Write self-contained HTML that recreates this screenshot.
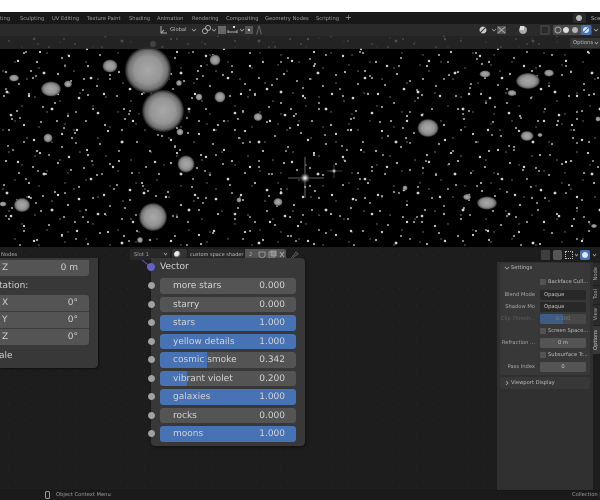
<!DOCTYPE html>
<html><head><meta charset="utf-8"><style>
*{box-sizing:border-box}
html,body{margin:0;padding:0;width:600px;height:500px;overflow:hidden;background:#fff}
body{position:relative;font-family:"DejaVu Sans","Liberation Sans",sans-serif;text-rendering:geometricPrecision;filter:blur(.35px)}
.a{position:absolute}
.t{position:absolute;white-space:nowrap;font-size:5.2px;line-height:8px;color:#9c9c9c}
.r{position:absolute;left:160px;width:136px;height:15.5px;border-radius:3px;background:#545454;overflow:hidden;font-size:9px;line-height:16px;color:#d4d4d4}
.r i{position:absolute;left:0;top:0;bottom:0;background:#4772b3}
.r b{position:absolute;left:13px;font-weight:normal;white-space:nowrap}
.r u{position:absolute;right:11px;text-decoration:none}
.s{position:absolute;left:147.5px;width:7px;height:7px;border-radius:50%;background:#a1a1a1}
.n{position:absolute;white-space:nowrap;font-size:9px;line-height:16px;color:#d0d0d0}
.lbl{position:absolute;white-space:nowrap;font-size:5.2px;line-height:11px;color:#a8a8a8}
.lr{position:absolute;left:500px;width:35px;text-align:right;white-space:nowrap;font-size:5.2px;line-height:10px;color:#a8a8a8}
.f{position:absolute;left:540px;width:46px;height:10px;border-radius:2px;background:#545454;font-size:5.2px;line-height:10px;color:#c4c4c4;text-align:center}
.dd{background:#282828;text-align:left;padding-left:4px}
.cb{position:absolute;left:540px;width:6px;height:6px;background:#545454;border-radius:1px}
.vt{position:absolute;left:593px;writing-mode:vertical-rl;transform:rotate(180deg);line-height:7px;width:7px;font-size:5.2px;white-space:nowrap;color:#aaa}
</style></head><body>
<div class="a" style="left:0;top:12px;width:600px;height:12px;background:#181818"></div>
<div class="a" style="left:0;top:24px;width:600px;height:12px;background:#2a2a2a"></div>

<svg class="a" style="left:0;top:36px" width="600" height="211" viewBox="0 36 600 211" xmlns="http://www.w3.org/2000/svg">
<defs>
<radialGradient id="g"><stop offset="0" stop-color="#a8a8a8"/><stop offset=".6" stop-color="#959595"/><stop offset=".85" stop-color="#6f6f6f"/><stop offset="1" stop-color="#1a1a1a"/></radialGradient>
<radialGradient id="l"><stop offset="0" stop-color="#fff"/><stop offset=".3" stop-color="#aaa"/><stop offset="1" stop-color="#000" stop-opacity="0"/></radialGradient>
<pattern id="p1" width="113" height="89" patternUnits="userSpaceOnUse"><g fill="#b8b8b8">
<circle cx="4" cy="7" r="1"/><circle cx="17" cy="22" r="1"/><circle cx="29" cy="5" r="1.1"/><circle cx="41" cy="33" r="1"/><circle cx="55" cy="14" r="1"/><circle cx="68" cy="27" r="1.1"/><circle cx="79" cy="9" r="1"/><circle cx="93" cy="20" r="1"/><circle cx="105" cy="36" r="1.1"/><circle cx="9" cy="41" r="1"/><circle cx="24" cy="53" r="1"/><circle cx="37" cy="62" r="1.1"/><circle cx="49" cy="47" r="1"/><circle cx="62" cy="58" r="1"/><circle cx="75" cy="44" r="1"/><circle cx="88" cy="66" r="1.1"/><circle cx="100" cy="55" r="1"/><circle cx="110" cy="75" r="1"/><circle cx="6" cy="72" r="1.1"/><circle cx="19" cy="84" r="1"/><circle cx="33" cy="78" r="1"/><circle cx="46" cy="85" r="1"/><circle cx="58" cy="74" r="1.1"/><circle cx="71" cy="81" r="1"/><circle cx="84" cy="79" r="1"/><circle cx="97" cy="86" r="1"/><circle cx="12" cy="30" r="1"/><circle cx="64" cy="39" r="1"/><circle cx="86" cy="32" r="1"/><circle cx="43" cy="18" r="1"/></g></pattern>
<pattern id="p2" width="137" height="101" patternUnits="userSpaceOnUse"><g fill="#d6d6d6">
<circle cx="11" cy="14" r="1.3"/><circle cx="34" cy="39" r="1.2"/><circle cx="52" cy="8" r="1.4"/><circle cx="77" cy="29" r="1.2"/><circle cx="98" cy="12" r="1.3"/><circle cx="122" cy="41" r="1.4"/><circle cx="18" cy="61" r="1.2"/><circle cx="44" cy="73" r="1.4"/><circle cx="69" cy="56" r="1.2"/><circle cx="91" cy="78" r="1.3"/><circle cx="113" cy="66" r="1.2"/><circle cx="130" cy="89" r="1.3"/><circle cx="7" cy="92" r="1.4"/><circle cx="29" cy="96" r="1.2"/><circle cx="58" cy="94" r="1.2"/><circle cx="79" cy="98" r="1.3"/><circle cx="104" cy="94" r="1.2"/><circle cx="133" cy="20" r="1.2"/><circle cx="62" cy="33" r="1.1"/><circle cx="24" cy="24" r="1.1"/><circle cx="87" cy="49" r="1.1"/><circle cx="108" cy="30" r="1.1"/><circle cx="40" cy="52" r="1.1"/></g></pattern>
<pattern id="p3" width="71" height="59" patternUnits="userSpaceOnUse"><g fill="#7a7a7a">
<circle cx="3" cy="12" r=".8"/><circle cx="15" cy="3" r=".7"/><circle cx="27" cy="20" r=".8"/><circle cx="39" cy="9" r=".7"/><circle cx="52" cy="24" r=".8"/><circle cx="65" cy="6" r=".7"/><circle cx="9" cy="34" r=".8"/><circle cx="22" cy="47" r=".7"/><circle cx="35" cy="38" r=".8"/><circle cx="47" cy="53" r=".7"/><circle cx="60" cy="42" r=".8"/><circle cx="68" cy="55" r=".7"/></g></pattern>
<pattern id="p4" width="167" height="127" patternUnits="userSpaceOnUse"><g fill="#a4a4a4">
<circle cx="8" cy="19" r="1"/><circle cx="13" cy="23" r="1"/><circle cx="31" cy="71" r="1.1"/><circle cx="36" cy="76" r="1"/><circle cx="49" cy="28" r="1"/><circle cx="72" cy="11" r="1.1"/><circle cx="76" cy="16" r="1"/><circle cx="83" cy="90" r="1"/><circle cx="88" cy="95" r="1.1"/><circle cx="102" cy="47" r="1"/><circle cx="119" cy="24" r="1"/><circle cx="124" cy="109" r="1.1"/><circle cx="129" cy="114" r="1"/><circle cx="143" cy="59" r="1"/><circle cx="148" cy="64" r="1.1"/><circle cx="158" cy="8" r="1"/><circle cx="20" cy="118" r="1"/><circle cx="57" cy="121" r="1.1"/><circle cx="65" cy="66" r="1"/><circle cx="110" cy="79" r="1"/><circle cx="6" cy="89" r="1"/><circle cx="38" cy="44" r="1"/><circle cx="92" cy="34" r="1"/><circle cx="136" cy="88" r="1"/><circle cx="152" cy="103" r="1"/><circle cx="26" cy="52" r="1"/><circle cx="76" cy="112" r="1"/><circle cx="114" cy="62" r="1"/></g></pattern>
</defs>
<rect x="0" y="36" width="600" height="211" fill="#000"/>
<rect x="0" y="36" width="600" height="211" fill="url(#p3)"/>
<rect x="0" y="36" width="600" height="211" fill="url(#p4)"/>
<rect x="0" y="36" width="600" height="211" fill="url(#p1)"/>
<rect x="0" y="36" width="600" height="211" fill="url(#p2)"/>
<g fill="url(#g)">
<ellipse cx="148" cy="70" rx="23" ry="23"/><ellipse cx="163" cy="111" rx="21" ry="21"/><ellipse cx="153" cy="217" rx="14" ry="14"/><ellipse cx="186" cy="164" rx="8.5" ry="8.5"/><ellipse cx="51" cy="89" rx="10" ry="7.5"/><ellipse cx="110" cy="66" rx="7.5" ry="6.5"/><ellipse cx="215" cy="60" rx="5.5" ry="5.5"/><ellipse cx="220" cy="97" rx="5.5" ry="5.5"/><ellipse cx="22" cy="205" rx="8" ry="7"/><ellipse cx="14" cy="78" rx="5" ry="3.5"/><ellipse cx="68" cy="84" rx="4" ry="3.5"/><ellipse cx="48" cy="138" rx="4.5" ry="4.5"/><ellipse cx="258" cy="117" rx="4.5" ry="4"/><ellipse cx="179" cy="83" rx="3" ry="3"/><ellipse cx="180" cy="132" rx="3.5" ry="3.5"/><ellipse cx="199" cy="97" rx="3.5" ry="3.5"/><ellipse cx="278" cy="202" rx="4.5" ry="4"/><ellipse cx="239" cy="200" rx="2.5" ry="2.5"/><ellipse cx="140" cy="240" rx="3" ry="3"/><ellipse cx="3" cy="204" rx="3.5" ry="2.5"/><ellipse cx="153" cy="44" rx="3.5" ry="3.5"/>
<ellipse cx="428" cy="128" rx="10.5" ry="9"/><ellipse cx="528" cy="81" rx="12" ry="8"/><ellipse cx="487" cy="203" rx="10" ry="6.5"/><ellipse cx="527" cy="136" rx="6.5" ry="5"/><ellipse cx="485" cy="74" rx="5.5" ry="3.5"/><ellipse cx="549" cy="73" rx="5" ry="3.5"/><ellipse cx="512" cy="93" rx="4.5" ry="3"/><ellipse cx="405" cy="188" rx="2.5" ry="2.5"/><ellipse cx="467" cy="197" rx="4" ry="3"/><ellipse cx="594" cy="226" rx="3" ry="2"/><ellipse cx="598" cy="119" rx="2.5" ry="2.5"/><ellipse cx="540" cy="135" rx="2.5" ry="2"/>
</g>
<g stroke="#b5b5b5" stroke-width=".6"><line x1="305" y1="157" x2="305" y2="198"/><line x1="288" y1="178" x2="324" y2="178"/><line x1="334" y1="164" x2="334" y2="178" stroke="#666"/><line x1="327" y1="171" x2="342" y2="171" stroke="#666"/></g>
<circle cx="305" cy="178" r="6" fill="url(#l)"/><circle cx="334" cy="171" r="3" fill="url(#l)"/>
</svg>
<div class="a" style="left:0;top:36px;width:600px;height:13px;background:rgba(44,44,44,.8)"></div>

<div class="t" style="left:0;top:15px">ting</div>
<div class="t" style="left:20px;top:15px">Sculpting</div>
<div class="t" style="left:52px;top:15px">UV Editing</div>
<div class="t" style="left:87px;top:15px">Texture Paint</div>
<div class="t" style="left:129px;top:15px">Shading</div>
<div class="t" style="left:157px;top:15px">Animation</div>
<div class="t" style="left:192px;top:15px">Rendering</div>
<div class="t" style="left:226px;top:15px">Compositing</div>
<div class="t" style="left:265px;top:15px">Geometry Nodes</div>
<div class="t" style="left:316px;top:15px">Scripting</div>
<div class="t" style="left:345px;top:14px;font-size:8px">+</div>
<div class="a" style="left:573px;top:13px;width:13px;height:10px;background:#2a2a2a;border-radius:2px"></div>
<div class="a" style="left:576px;top:15px;width:6px;height:6px;background:#bbb;border-radius:50%"></div>
<div class="t" style="left:591px;top:15px;color:#bbb">Sce</div>

<svg class="a" style="left:150px;top:24px" width="120" height="12" viewBox="0 0 120 12" fill="none" stroke="#a8a8a8" stroke-width="1">
<path d="M11 2v7h6M11 9l3-3"/><path d="M42 5l2 2 2-2M90 5l2 2 2-2M62 5l2 2 2-2" stroke-width=".8"/>
<circle cx="55" cy="7" r="2.5"/><circle cx="58" cy="4" r="2.5"/>
<rect x="68" y="2" width="8" height="8" fill="#666" stroke="none"/>
<path d="M78 9V6M87 9V6M78 8h9"/><rect x="83" y="2" width="2" height="2" fill="#ddd" stroke="none"/>
<rect x="95" y="2" width="8" height="8" fill="#555" stroke="none"/><rect x="98" y="5" width="2" height="2" fill="#ccc" stroke="none"/>
<path d="M106 10c2 0 2-8 3-8s1 8 3 8" stroke="#666"/>
</svg>
<div class="t" style="left:170px;top:26px;color:#b8b8b8">Global</div>

<svg class="a" style="left:470px;top:24px" width="130" height="12" viewBox="0 0 130 12" fill="none">
<circle cx="13" cy="6" r="3.5" fill="#ccc"/><path d="M10 9l6-6" stroke="#333"/><path d="M22 5l2 2 2-2" stroke="#999" stroke-width=".8"/>
<rect x="27" y="2" width="9" height="8" fill="#555"/><path d="M28 3l7 6M35 3l-7 6" stroke="#aaa"/>
<circle cx="53" cy="6" r="4" fill="#aaa"/><rect x="50" y="2" width="4" height="4" fill="#ddd"/>
<rect x="71" y="2" width="8" height="8" stroke="#4e4e4e"/>
<rect x="83" y="1" width="39" height="10" rx="2" fill="#4a4a4a"/>
<circle cx="88" cy="6" r="3" stroke="#aaa"/><circle cx="96" cy="6" r="3" fill="#ddd"/><circle cx="105" cy="6" r="3" fill="#b5b5b5"/>
<rect x="111" y="1" width="10" height="10" rx="2" fill="#4772b3"/><circle cx="116" cy="6" r="3" fill="#dfe8f5"/><path d="M114 8l4-4" stroke="#4772b3"/>
<path d="M124 5l2 2 2-2" stroke="#aaa" stroke-width=".8"/>
</svg>
<div class="a" style="left:570px;top:38px;width:30px;height:10px;background:#363636;border-radius:2px 0 0 2px"></div>
<div class="t" style="left:573px;top:39px;color:#bdbdbd">Options</div>
<svg class="a" style="left:594px;top:41px" width="5" height="5" fill="none" stroke="#aaa" stroke-width=".7"><path d="M1 1l1.500 2 1.500-2"/></svg>

<!-- node editor -->
<div class="a" style="left:0;top:247px;width:600px;height:243px;background:#1d1d1d"></div>
<svg class="a" style="left:0;top:247px" width="497" height="243"><defs><pattern id="dots" width="17" height="16.5" patternUnits="userSpaceOnUse"><rect x="8" y="8" width="1" height="1" fill="#2a2a2a"/></pattern></defs><rect width="497" height="243" fill="url(#dots)"/></svg>
<div class="a" style="left:0;top:490px;width:600px;height:10px;background:#1a1a1a;border-top:1px solid #161616"></div>
<div class="a" style="left:593px;top:247px;width:7px;height:243px;background:#1d1d1d"></div>

<div class="t" style="left:1px;top:251px;color:#a6a6a6">Nodes</div>
<div class="a" style="left:130px;top:249px;width:40px;height:11px;background:#282828;border-radius:2px"></div>
<div class="t" style="left:134px;top:251px;color:#a6a6a6">Slot 1</div>
<svg class="a" style="left:163px;top:252px" width="5" height="5" fill="none" stroke="#aaa" stroke-width=".7"><path d="M1 1l1.500 2 1.500-2"/></svg>
<div class="a" style="left:172px;top:249px;width:15px;height:11px;background:#333;border-radius:2px"></div>
<div class="a" style="left:174px;top:251px;width:7px;height:7px;background:radial-gradient(circle at 35% 35%,#eee 35%,#444 60%);border-radius:50%"></div>
<div class="a" style="left:188px;top:249px;width:56px;height:11px;background:#282828"></div>
<div class="t" style="left:190px;top:251px;color:#bdbdbd;font-size:5px">custom space shader</div>
<div class="a" style="left:245px;top:249px;width:41px;height:11px;background:#545454;border-radius:0 2px 2px 0"></div>
<div class="t" style="left:249px;top:251px;color:#bdbdbd">2</div>
<svg class="a" style="left:256px;top:249px" width="44" height="11" fill="none" stroke="#aaa" stroke-width=".8"><path d="M3 3h6v3c0 2-3 3-3 3s-3-1-3-3z"/><rect x="13" y="3" width="5" height="6"/><rect x="15" y="2" width="5" height="5" fill="#888"/><path d="M24 3l4 5M28 3l-4 5" stroke-width="1"/><path d="M35 9l3-3 2-3 2 2-3 2-3 3" stroke="#666"/></svg>

<!-- left node -->
<div class="a" style="left:0;top:258px;width:98px;height:110px;background:#383838;border-radius:0 0 4px 0;box-shadow:1px 1px 2px rgba(0,0,0,.5)"></div>
<div class="a" style="left:0;top:260px;width:89px;height:16px;background:#545454;border-radius:0 0 3px 0"></div>
<div class="n" style="left:2px;top:260px">Z</div>
<div class="n" style="right:522px;top:260px">0 m</div>
<div class="n" style="left:-1px;top:278px">tation:</div>
<div class="a" style="left:0;top:295px;width:89px;height:50px;background:#545454;border-radius:0 3px 3px 0"></div>
<div class="a" style="left:0;top:311px;width:89px;height:1px;background:#3c3c3c"></div>
<div class="a" style="left:0;top:328px;width:89px;height:1px;background:#3c3c3c"></div>
<div class="n" style="left:2px;top:295px">X</div>
<div class="n" style="right:522px;top:295px">0°</div>
<div class="n" style="left:2px;top:312px">Y</div>
<div class="n" style="right:522px;top:312px">0°</div>
<div class="n" style="left:2px;top:329px">Z</div>
<div class="n" style="right:522px;top:329px">0°</div>
<div class="n" style="left:-1px;top:348px">ale</div>

<!-- main node -->
<div class="a" style="left:151px;top:258px;width:154px;height:188px;background:#383838;border-radius:0 4px 4px 4px;box-shadow:1px 1px 3px rgba(0,0,0,.5)"></div>
<svg class="a" style="left:138px;top:255px" width="16" height="14"><line x1="4" y1="5" x2="13" y2="12" stroke="#5a5ab0" stroke-width="1"/></svg>
<div class="a" style="left:147px;top:263px;width:8px;height:8px;border-radius:50%;background:#6363c7"></div>
<div class="n" style="left:160px;top:259px;color:#d4d4d4">Vector</div>

<div class="s" style="top:282px"></div><div class="r" style="top:278px"><b>more stars</b><u>0.000</u></div>
<div class="s" style="top:301px"></div><div class="r" style="top:296.5px"><b>starry</b><u>0.000</u></div>
<div class="s" style="top:319px"></div><div class="r" style="top:315px"><i style="width:100%"></i><b>stars</b><u>1.000</u></div>
<div class="s" style="top:338px"></div><div class="r" style="top:333.5px"><i style="width:100%"></i><b>yellow details</b><u>1.000</u></div>
<div class="s" style="top:356px"></div><div class="r" style="top:352px"><i style="width:34.2%"></i><b>cosmic smoke</b><u>0.342</u></div>
<div class="s" style="top:375px"></div><div class="r" style="top:370.7px"><i style="width:20%"></i><b>vibrant violet</b><u>0.200</u></div>
<div class="s" style="top:393px"></div><div class="r" style="top:389.2px"><i style="width:100%"></i><b>galaxies</b><u>1.000</u></div>
<div class="s" style="top:412px"></div><div class="r" style="top:407.8px"><b>rocks</b><u>0.000</u></div>
<div class="s" style="top:430px"></div><div class="r" style="top:426.3px"><i style="width:100%"></i><b>moons</b><u>1.000</u></div>

<!-- editor header right icons -->
<div class="a" style="left:541px;top:250px;width:9px;height:10px;background:#3e3e3e;border-radius:1px"></div>
<div class="a" style="left:553px;top:250px;width:9px;height:10px;background:#555;border-radius:2px"></div>
<div class="a" style="left:565px;top:251px;width:8px;height:8px;border:1px dotted #bbb"></div>
<svg class="a" style="left:574px;top:253px" width="5" height="5" fill="none" stroke="#aaa" stroke-width=".7"><path d="M1 1l1.500 2 1.500-2"/></svg>
<div class="a" style="left:580px;top:250px;width:10px;height:10px;background:#4772b3;border-radius:2px"></div>
<div class="a" style="left:582px;top:252px;width:6px;height:6px;background:#dfe8f5;border-radius:50%"></div>
<svg class="a" style="left:592px;top:253px" width="5" height="5" fill="none" stroke="#aaa" stroke-width=".7"><path d="M1 1l1.500 2 1.500-2"/></svg>

<!-- sidebar -->
<div class="a" style="left:497px;top:262px;width:96px;height:228px;background:#303030"></div>
<div class="a" style="left:500px;top:263px;width:90px;height:112px;background:#383838;border-radius:3px"></div>
<div class="a" style="left:500px;top:377px;width:90px;height:12px;background:#383838;border-radius:3px"></div>
<div class="t" style="left:511px;top:264px;color:#bcbcbc;line-height:8px">Settings</div>
<svg class="a" style="left:504px;top:265px" width="6" height="6" fill="none" stroke="#aaa" stroke-width=".8"><path d="M1 2l2 2 2-2"/></svg>
<div class="t" style="left:511px;top:379px;color:#bcbcbc">Viewport Display</div>
<svg class="a" style="left:504px;top:380px" width="6" height="6" fill="none" stroke="#aaa" stroke-width=".8"><path d="M2 1l2 2-2 2"/></svg>

<div class="cb" style="top:279px"></div><div class="lbl" style="left:548px;top:277px;color:#bcbcbc">Backface Cull...</div>
<div class="lr" style="top:290px">Blend Mode</div><div class="f dd" style="top:290px">Opaque</div>
<div class="lr" style="top:302px">Shadow Mo</div><div class="f dd" style="top:302px">Opaque</div>
<div class="lr" style="top:314px;color:#5c5c5c">Clip Thresh...</div>
<div class="f" style="top:314px;background:linear-gradient(90deg,#3f5c86 50%,#484848 50%);color:#777">0.500</div>
<div class="cb" style="top:328px"></div><div class="lbl" style="left:548px;top:326px;color:#bcbcbc">Screen Space...</div>
<div class="lr" style="top:338px">Refraction ...</div><div class="f" style="top:338px">0 m</div>
<div class="cb" style="top:352px"></div><div class="lbl" style="left:548px;top:350px;color:#bcbcbc">Subsurface Tr...</div>
<div class="lr" style="top:362px">Pass Index</div><div class="f" style="top:362px">0</div>

<div class="a" style="left:593px;top:263px;width:7px;height:22px;background:#2a2a2a"></div>
<div class="a" style="left:593px;top:286px;width:7px;height:18px;background:#2a2a2a"></div>
<div class="a" style="left:593px;top:305px;width:7px;height:20px;background:#2a2a2a"></div>
<div class="a" style="left:593px;top:326px;width:7px;height:28px;background:#383838"></div>
<div class="vt" style="top:267px">Node</div>
<div class="vt" style="top:289px">Tool</div>
<div class="vt" style="top:308px">View</div>
<div class="vt" style="top:330px;color:#ccc">Options</div>

<!-- status bar -->
<div class="a" style="left:45px;top:491px;width:5px;height:8px;border:1px solid #999;border-radius:2px"></div>
<div class="t" style="left:56px;top:491px;color:#9c9c9c">Object Context Menu</div>
<div class="t" style="left:572px;top:491px;color:#9c9c9c">Collection |</div>
</body></html>
